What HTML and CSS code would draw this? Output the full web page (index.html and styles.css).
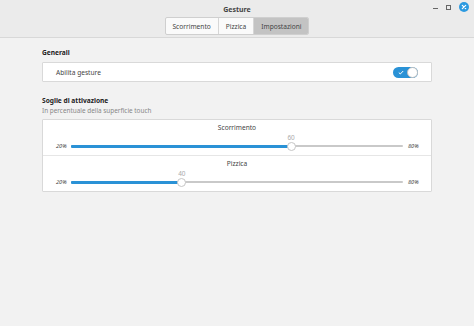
FILE: index.html
```html
<!DOCTYPE html>
<html lang="it">
<head>
<meta charset="utf-8">
<link rel="stylesheet" href="styles.css">
</head>
<body>
<div class="window">
  <header class="titlebar">
    <div class="title-row">
      <span class="title">Gesture</span>
      <div class="controls">
        <span class="ctl-min"></span>
        <span class="ctl-max"></span>
        <span class="ctl-close">
          <svg width="10" height="10" viewBox="0 0 10 10"><circle cx="5" cy="5" r="5" fill="#2c9ae0"/><path d="M3.3 3.3 L6.7 6.7 M6.7 3.3 L3.3 6.7" stroke="#fff" stroke-width="1.2" stroke-linecap="round"/></svg>
        </span>
      </div>
    </div>
    <nav class="tabs">
      <span class="tab">Scorrimento</span>
      <span class="tab">Pizzica</span>
      <span class="tab active">Impostazioni</span>
    </nav>
  </header>
  <main class="content">
    <section class="section">
      <h2 class="sec-title">Generali</h2>
      <div class="box">
        <div class="switch-row">
          <span class="row-label">Abilita gesture</span>
          <span class="switch">
            <svg class="check" width="6" height="5" viewBox="0 0 6 5"><path d="M0.8 2.6 L2.3 4 L5.2 1" stroke="#fff" stroke-width="1" fill="none"/></svg>
            <span class="knob"></span>
          </span>
        </div>
      </div>
    </section>
    <section class="section second">
      <h2 class="sec-title">Soglie di attivazione</h2>
      <p class="sec-sub">In percentuale della superficie touch</p>
      <div class="box">
        <div class="slider-row">
          <div class="slider-title">Scorrimento</div>
          <div class="slider">
            <span class="end">20%</span>
            <div class="track">
              <div class="fill" style="width:66.3%"></div>
              <div class="thumb" style="left:66.3%"><span class="val">60</span></div>
            </div>
            <span class="end">80%</span>
          </div>
        </div>
        <div class="slider-row sep">
          <div class="slider-title">Pizzica</div>
          <div class="slider">
            <span class="end">20%</span>
            <div class="track">
              <div class="fill" style="width:33.4%"></div>
              <div class="thumb" style="left:33.4%"><span class="val">40</span></div>
            </div>
            <span class="end">80%</span>
          </div>
        </div>
      </div>
    </section>
  </main>
</div>
</body>
</html>
```
FILE: styles.css
```css
* { box-sizing: border-box; }
html, body { margin: 0; padding: 0; }
body {
  width: 474px;
  height: 326px;
  background: #f2f2f2;
  font-family: "Noto Sans", "Open Sans", sans-serif;
  color: #333;
  font-size: 7px;
  overflow: hidden;
}
.window { height: 326px; display: flex; flex-direction: column; }
.titlebar {
  height: 38px;
  background: #ebebeb;
  border-bottom: 1px solid #d8d8d8;
  display: flex;
  flex-direction: column;
  align-items: center;
}
.title-row {
  width: 100%;
  height: 17px;
  position: relative;
  display: flex;
  justify-content: center;
  align-items: center;
  padding-top: 1px;
}
.title { font-weight: bold; font-size: 7px; color: #444; }
.controls {
  position: absolute;
  right: 5px;
  top: 2px;
  display: flex;
  align-items: center;
  gap: 8px;
}
.ctl-min { width: 5px; height: 1px; background: #666; margin-top: 3px; }
.ctl-max { width: 5px; height: 5px; border: 1px solid #666; }
.ctl-close { display: flex; width: 10px; height: 10px; }
.tabs {
  display: flex;
  height: 18px;
  border: 1px solid #cfcfcf;
  border-radius: 2px;
  background: #fafafa;
  overflow: hidden;
}
.tab {
  display: flex;
  align-items: center;
  padding: 0 7px;
  font-size: 6.6px;
  color: #444;
  border-right: 1px solid #d6d6d6;
}
.tab:last-child { border-right: none; }
.tab.active { background: #c3c3c3; color: #444; }

.content { padding: 0 42px; }
.section { display: flex; flex-direction: column; }
.sec-title {
  margin: 10px 0 4px;
  font-size: 6.6px;
  line-height: 10px;
  font-weight: bold;
  color: #222;
}
.second .sec-title { margin: 14px 0 0; }
.sec-sub {
  margin: 0 0 3px;
  font-size: 6.4px;
  line-height: 10px;
  color: #888;
}
.box {
  background: #fff;
  border: 1px solid #d9d9d9;
  border-radius: 1px;
}
.switch-row {
  height: 18px;
  display: flex;
  align-items: center;
  justify-content: space-between;
  padding: 0 13px 0 13px;
}
.row-label { font-size: 6.6px; color: #444; }
.switch {
  position: relative;
  width: 25px;
  height: 11px;
  border-radius: 6px;
  background: #2a92d6;
  display: flex;
  align-items: center;
}
.check { position: absolute; left: 5px; top: 3px; }
.knob {
  position: absolute;
  right: 0;
  top: 0;
  width: 11px;
  height: 11px;
  border-radius: 50%;
  background: #fff;
  border: 1px solid #bfbfbf;
}
.slider-row { padding: 3px 0 5px; }
.slider-row.sep { border-top: 1px solid #e6e6e6; }
.slider-title {
  text-align: center;
  line-height: 10px;
  font-size: 6.6px;
  color: #444;
}
.slider {
  margin-top: 9px;
  height: 8px;
  display: flex;
  align-items: center;
  padding: 0 13px;
}
.end {
  font-size: 5.6px;
  font-style: italic;
  color: #444;
  width: 15px;
}
.slider .end:last-child { text-align: right; width: 10px; margin-left: 5px; }
.track {
  position: relative;
  flex: 1;
  height: 2px;
  background: #c9c9c9;
  border-radius: 1px;
}
.fill {
  position: absolute;
  left: 0;
  top: -0.5px;
  height: 3px;
  background: #2a92d6;
  border-radius: 1px;
}
.thumb {
  position: absolute;
  top: 1px;
  width: 9px;
  height: 9px;
  margin: -4.5px 0 0 -4.5px;
  border-radius: 50%;
  background: #fff;
  border: 1px solid #c6c6c6;
}
.val {
  position: absolute;
  bottom: 8px;
  left: 50%;
  transform: translateX(-50%);
  font-size: 6.4px;
  color: #aaa;
  line-height: 8px;
}
```
